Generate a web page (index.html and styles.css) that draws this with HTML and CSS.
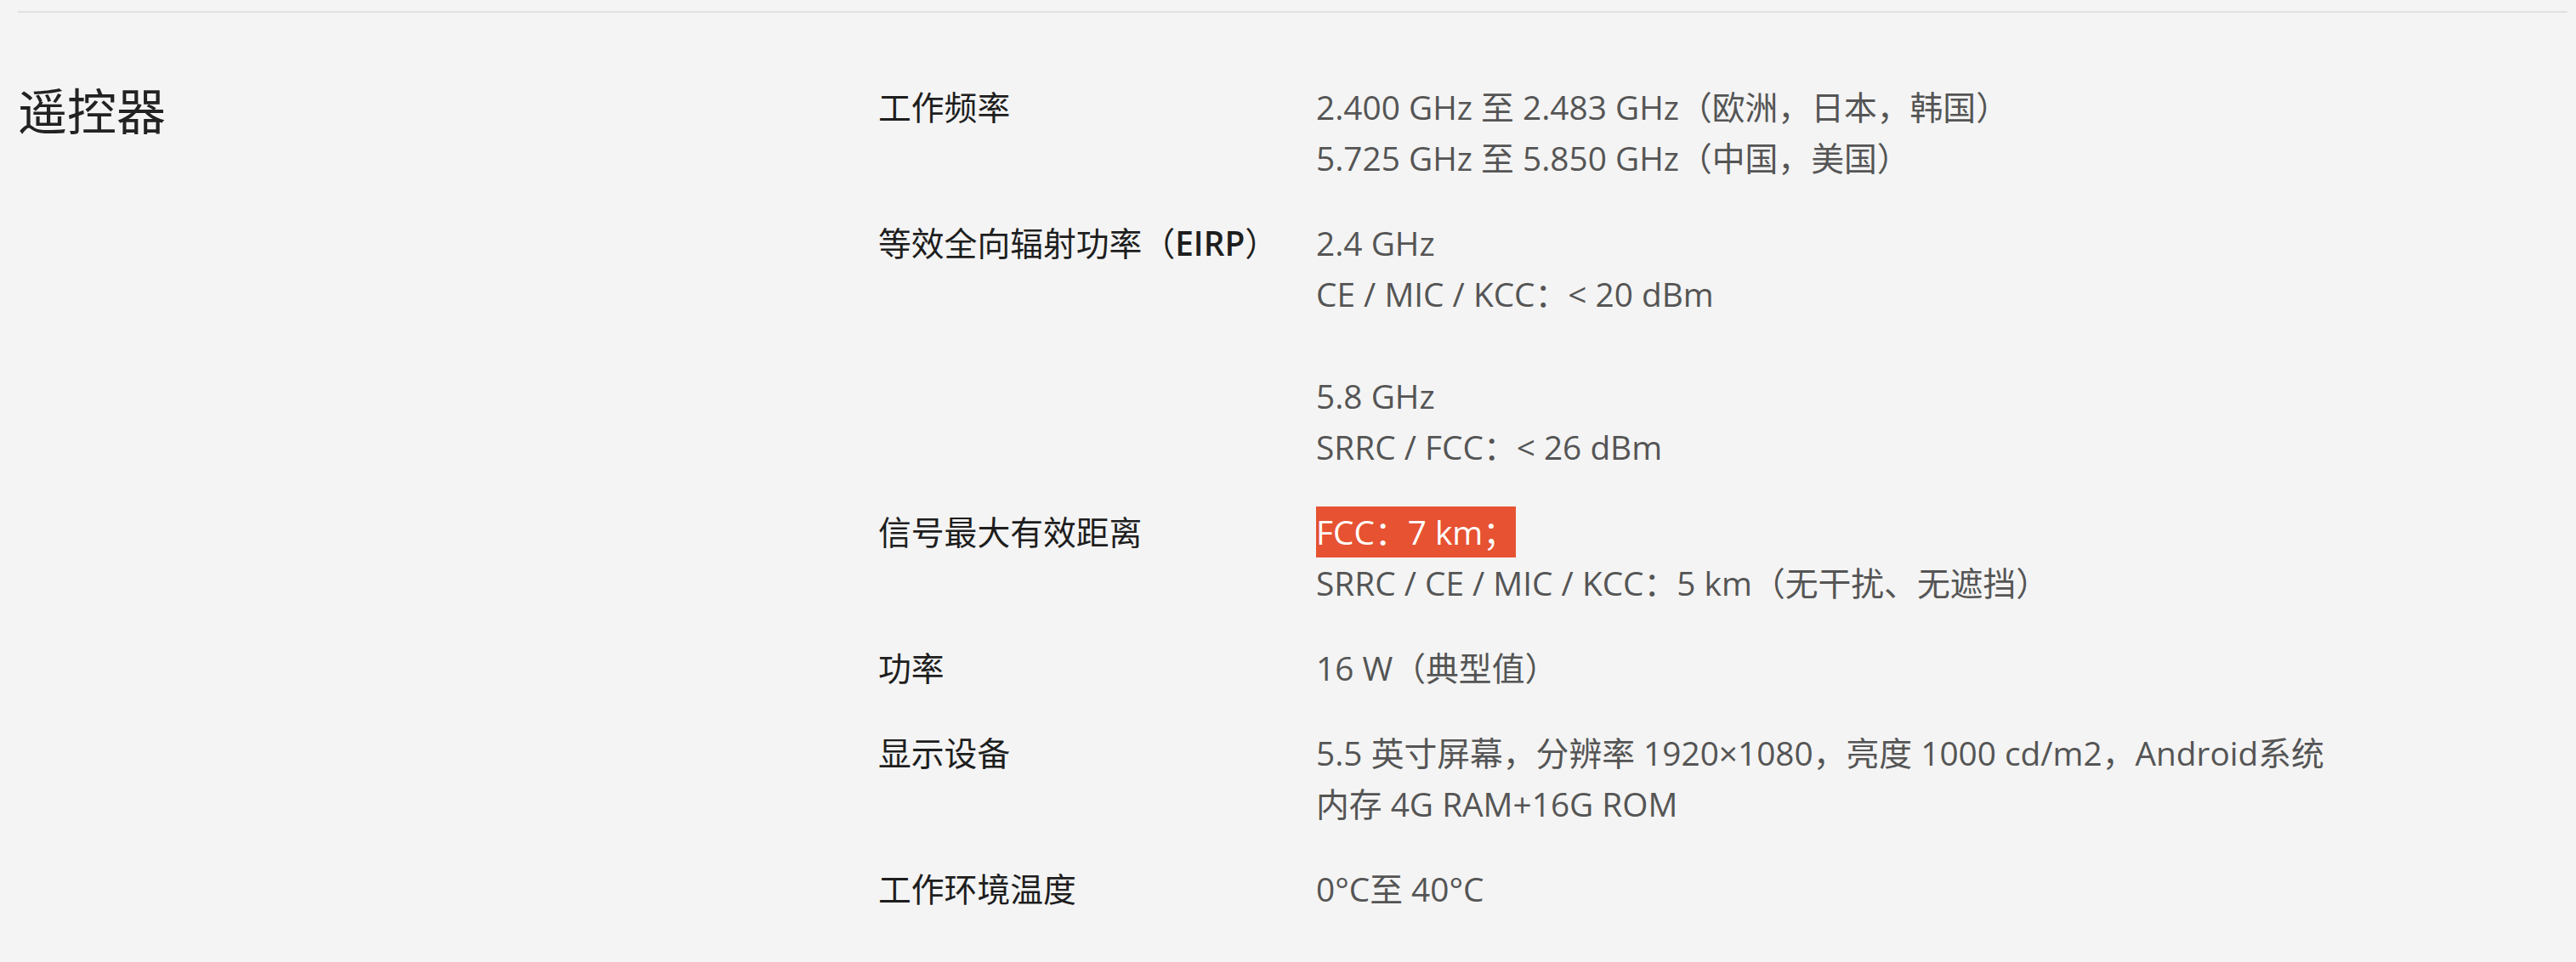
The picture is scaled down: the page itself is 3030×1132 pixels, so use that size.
FILE: index.html
```html
<!DOCTYPE html>
<html lang="zh-CN">
<head>
<meta charset="utf-8">
<title>遥控器 规格参数</title>
<link rel="stylesheet" href="styles.css">
</head>
<body>
<main class="spec">
  <section class="spec-group">
    <h2 class="group-title">遥控器</h2>
    <dl class="spec-list">
      <div class="spec-row">
        <dt class="spec-label">工作频率</dt>
        <dd class="spec-value">
          <p class="line">2.400 GHz 至 2.483 GHz（欧洲，日本，韩国）</p>
          <p class="line">5.725 GHz 至 5.850 GHz（中国，美国）</p>
        </dd>
      </div>
      <div class="spec-row">
        <dt class="spec-label">等效全向辐射功率（<abbr class="spec-abbr" title="Effective Isotropic Radiated Power">EIRP</abbr>）</dt>
        <dd class="spec-value">
          <p class="line">2.4 GHz</p>
          <p class="line">CE / MIC / KCC：&lt; 20 dBm</p>
          <p class="line line-empty"></p>
          <p class="line">5.8 GHz</p>
          <p class="line">SRRC / FCC：&lt; 26 dBm</p>
        </dd>
      </div>
      <div class="spec-row">
        <dt class="spec-label">信号最大有效距离</dt>
        <dd class="spec-value">
          <p class="line line-selected">FCC：7 km；</p>
          <p class="line">SRRC / CE / MIC / KCC：5 km（无干扰、无遮挡）</p>
        </dd>
      </div>
      <div class="spec-row">
        <dt class="spec-label">功率</dt>
        <dd class="spec-value">
          <p class="line">16 W（典型值）</p>
        </dd>
      </div>
      <div class="spec-row">
        <dt class="spec-label">显示设备</dt>
        <dd class="spec-value">
          <p class="line">5.5 英寸屏幕，分辨率 1920×1080，亮度 1000 cd/m2，Android系统</p>
          <p class="line">内存 4G RAM+16G ROM</p>
        </dd>
      </div>
      <div class="spec-row">
        <dt class="spec-label">工作环境温度</dt>
        <dd class="spec-value">
          <p class="line">0°C至 40°C</p>
        </dd>
      </div>
    </dl>
  </section>
</main>
</body>
</html>
```
FILE: styles.css
```css
html, body {
  margin: 0;
  padding: 0;
  background: #f4f4f4;
}

body {
  font-family: "Open Sans", "Noto Sans CJK SC", sans-serif;
  color: #555555;
}

.spec {
  padding: 13px 10px 0 21px;
}

.spec-group {
  display: flex;
  align-items: flex-start;
  border-top: 2px solid #e1e1e1;
  padding-top: 81px;
}

.group-title {
  flex: none;
  width: 1012px;
  margin: 0;
  font-size: 58px;
  line-height: 69px;
  font-weight: 400;
  color: #222222;
}

.spec-list {
  flex: 1;
  margin: 0;
  display: flex;
  flex-direction: column;
  gap: 40px;
}

.spec-row {
  display: flex;
  align-items: flex-start;
}

.spec-label {
  flex: none;
  width: 515px;
  font-size: 38.8px;
  line-height: 60px;
  font-weight: 400;
  color: #1e1e1e;
}

.spec-abbr {
  font-weight: 600;
  text-decoration: none;
}

.spec-value {
  margin: 0;
  font-size: 38.8px;
  line-height: 60px;
  color: #555555;
}

.line {
  margin: 0;
  height: 60px;
  white-space: nowrap;
}

.line-selected {
  width: fit-content;
  background: #e65232;
  color: #ffffff;
}
```
